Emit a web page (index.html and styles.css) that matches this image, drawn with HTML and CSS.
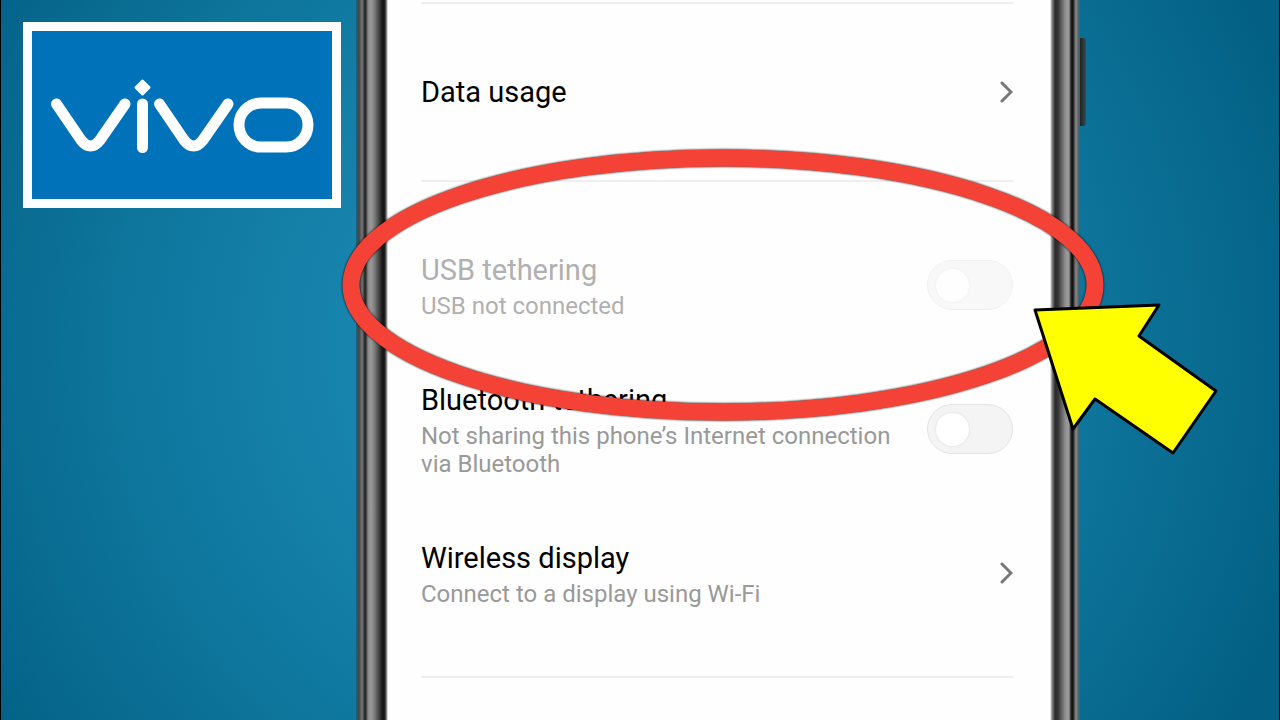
FILE: index.html
```html
<!DOCTYPE html>
<html lang="en">
<head>
    <meta charset="UTF-8">
    <meta name="viewport" content="width=device-width, initial-scale=1.0">
    <title>Vivo USB tethering</title>
    <link rel="stylesheet" href="styles.css">
</head>
<body>
    <main class="stage">
        <div class="brand">
            <svg class="logo" viewBox="0 0 300 168" role="img" aria-label="vivo">
                <g fill="none" stroke="#fff" stroke-width="11" stroke-linecap="round" stroke-linejoin="round">
                    <path d="M24.500 73 L49 109 Q58.500 121 68 109 L93 73"/>
                    <path d="M110.500 73 V116.500"/>
                    <path d="M127.500 73 L152 109 Q161.500 121 171 109 L196 73"/>
                    <rect x="207" y="72" width="69" height="44" rx="22"/>
                </g>
                <path d="M110.500 50 L117 56.500 L110.500 63 L104 56.500 Z" fill="#fff" stroke="#fff" stroke-width="3" stroke-linejoin="round"/>
            </svg>
        </div>

        <div class="phone">
            <div class="rail rail-left"></div>
            <div class="screen">
                <section class="group">
                    <a class="row" href="#data-usage">
                        <span class="text"><span class="title">Data usage</span></span>
                        <svg class="chevron" viewBox="0 0 14 24" aria-hidden="true"><path d="M3 3 L12 12 L3 21"/></svg>
                    </a>
                </section>

                <section class="group">
                    <label class="row disabled" for="usb">
                        <span class="text">
                            <span class="title">USB tethering</span>
                            <span class="note">USB not connected</span>
                        </span>
                        <input class="toggle" type="checkbox" id="usb" disabled>
                    </label>
                    <label class="row" for="bluetooth">
                        <span class="text">
                            <span class="title">Bluetooth tethering</span>
                            <span class="note">Not sharing this phone’s Internet connection via Bluetooth</span>
                        </span>
                        <input class="toggle" type="checkbox" id="bluetooth">
                    </label>
                    <a class="row" href="#wireless-display">
                        <span class="text">
                            <span class="title">Wireless display</span>
                            <span class="note">Connect to a display using Wi-Fi</span>
                        </span>
                        <svg class="chevron" viewBox="0 0 14 24" aria-hidden="true"><path d="M3 3 L12 12 L3 21"/></svg>
                    </a>
                </section>

                <section class="group"></section>
            </div>
            <div class="rail rail-right"></div>
            <div class="power-key"></div>
        </div>

        <!-- Circle and arrow over the USB tethering row -->
        <svg class="marks" viewBox="0 0 1280 720" aria-hidden="true">
            <ellipse class="ring" cx="723" cy="285" rx="372" ry="127"/>
            <path class="arrow" d="M1035 310 L1159 305 L1139 336 L1216 391 L1173 453 L1095 399 L1073 429 Z"/>
        </svg>
    </main>
</body>
</html>
```
FILE: styles.css
```css
* {
    box-sizing: border-box;
}
body {
    margin: 0;
    font-family: Roboto, "Liberation Sans", sans-serif;
    background-color: #046387;
}
.stage {
    position: relative;
    display: grid;
    grid-template-columns: 355fr 724fr 199fr;
    min-height: 100vh;
    overflow: hidden;
    border-left: 1px solid #000;
    border-right: 1px solid #000;
    background: radial-gradient(circle 740px at 47% 48%, #1c8cb6 0%, #1784ad 35%, #0f779e 62%, #096b90 82%, #035f84 100%);
}

/* Logo card */
.brand {
    padding: 22px 15px 0 22px;
}
.logo {
    display: block;
    width: 100%;
    border: 9px solid #fff;
    background-color: #0072ba;
}

/* Phone */
.phone {
    position: relative;
    display: flex;
}
.rail-left {
    flex: 0 0 32px;
    background: linear-gradient(to right, #1c6580 0, #444 3px, #777 6px, #222 9px, #333 10px, #888 12px, #9a9a9a 15px, #777 19px, #444 23px, #111 27px, #222 29px, #aaa 31px, #fff 32px);
}
.rail-right {
    flex: 0 0 30px;
    background: linear-gradient(to right, #fff 0, #888 2px, #2b2b2b 5px, #333 8px, #666 12px, #969696 16px, #9a9a9a 19px, #222 21px, #0c0c0c 23px, #444 24px, #888 26px, #666 28px, #1c6580 30px);
}
.power-key {
    position: absolute;
    top: 38px;
    right: -6px;
    width: 6px;
    height: 88px;
    border-radius: 0 3px 3px 0;
    background: linear-gradient(to right, #222, #344c50);
}
.screen {
    flex: 1;
    padding: 2px 37px 0 33px;
    background-color: #fefefe;
}

/* Settings list */
.group {
    display: flex;
    flex-direction: column;
    gap: 60px;
    padding: 68px 0;
    border-top: 2px solid #efefef;
}
.group:last-child {
    padding: 40px 0 0;
}
.row {
    display: flex;
    align-items: center;
    justify-content: space-between;
    gap: 32px;
    color: #000;
    text-decoration: none;
}
.title, .note {
    display: block;
}
.title {
    font-size: 29px;
    line-height: 40px;
}
.note {
    margin-top: 2px;
    font-size: 24px;
    line-height: 28px;
    color: #999;
}
.disabled .title, .disabled .note {
    color: #b0b0b0;
}
.chevron {
    flex: none;
    width: 14px;
    height: 24px;
    fill: none;
    stroke: #777;
    stroke-width: 3;
    stroke-linecap: round;
}
.toggle {
    appearance: none;
    flex: none;
    display: flex;
    align-items: center;
    width: 86px;
    height: 50px;
    margin: 0;
    padding-left: 8px;
    border: 1px solid #e4e4e4;
    border-radius: 25px;
    background-color: #f4f4f4;
}
.toggle::before {
    content: "";
    width: 33px;
    height: 33px;
    border-radius: 50%;
    background-color: #fff;
    box-shadow: 0 0 2px 1px #e9e9e9;
}
.toggle:checked {
    justify-content: flex-end;
    padding-right: 8px;
    background-color: #4a90e2;
}
.toggle:disabled {
    opacity: 0.5;
}

/* Annotations */
.marks {
    position: absolute;
    top: 0;
    left: -1px;
    width: calc(100% + 2px);
    pointer-events: none;
}
.ring {
    fill: none;
    stroke: #f44336;
    stroke-width: 17;
    filter: drop-shadow(0 0 1px #000);
}
.arrow {
    fill: #ff0;
    stroke: #000;
    stroke-width: 3;
    stroke-linejoin: round;
}
```
